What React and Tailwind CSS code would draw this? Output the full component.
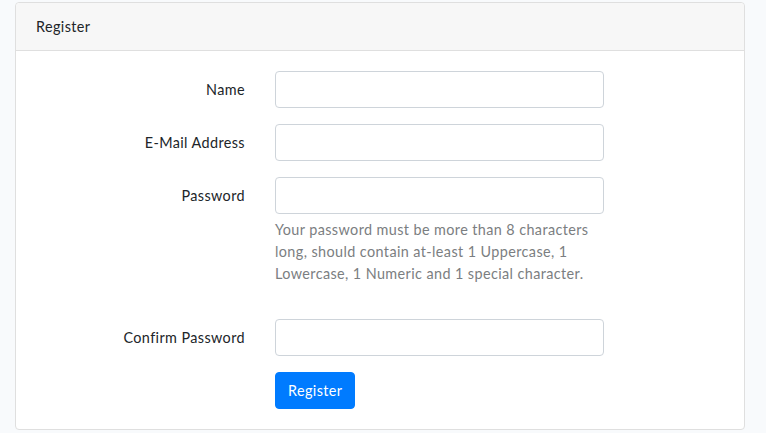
import React from 'react'

const Field = ({ label, type = 'text', last = false }) => (
  <div className={last ? 'flex' : 'flex mb-4'}>
    <label className="w-[239px] px-[15px] pt-[7px] text-right">{label}</label>
    <div className="w-[359px] px-[15px]">
      <input
        type={type}
        className="block w-full h-[37px] px-3 rounded border border-[#ced4da] bg-white outline-none"
      />
    </div>
  </div>
)

export default function App() {
  return (
    <div
      className="min-h-screen bg-[#f8fafc] pl-[15px] pr-[21px] pt-[2px] text-[14.4px] leading-[23px] tracking-[0.4px] text-[#212529]"
      style={{ fontFamily: 'Lato, "Open Sans", sans-serif' }}
    >
      <div className="bg-white border border-[#dfdfdf] rounded">
        <div className="bg-[#f7f7f7] border-b border-[#dfdfdf] px-5 py-3 rounded-t">Register</div>
        <form className="p-5" onSubmit={(e) => e.preventDefault()}>
          <div className="-mx-[15px]">
            <Field label="Name" />
            <Field label="E-Mail Address" type="email" />
            <div className="flex mb-[34px]">
              <label className="w-[239px] px-[15px] pt-[7px] text-right">Password</label>
              <div className="w-[359px] px-[15px]">
                <input
                  type="password"
                  className="block w-full h-[37px] px-3 rounded border border-[#ced4da] bg-white outline-none"
                />
                <p className="mt-[5px] leading-[22px] text-[#7b7e81]">
                  Your password must be more than 8 characters long, should contain at-least 1 Uppercase, 1
                  Lowercase, 1 Numeric and 1 special character.
                </p>
              </div>
            </div>
            <Field label="Confirm Password" type="password" />
            <div className="flex">
              <div className="ml-[239px] px-[15px]">
                <button
                  type="submit"
                  className="h-[37px] px-3 rounded bg-[#007bff] border border-[#007bff] text-white"
                >
                  Register
                </button>
              </div>
            </div>
          </div>
        </form>
      </div>
    </div>
  )
}
